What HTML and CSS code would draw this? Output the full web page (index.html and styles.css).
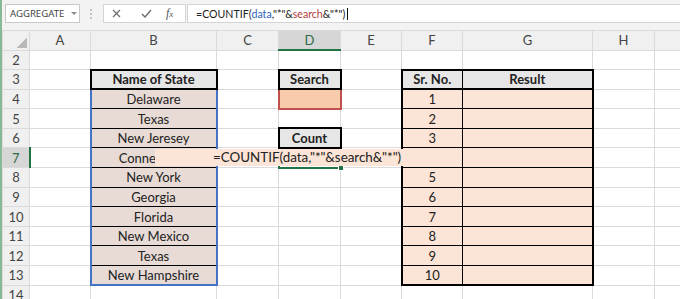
FILE: index.html
```html
<!DOCTYPE html>
<html lang="en">
<head>
<meta charset="utf-8">
<title>COUNTIF wildcard search</title>
<link rel="stylesheet" href="styles.css">
</head>
<body>
<div class="app">
  <div class="toolbar">
    <div class="namebox"><span class="nb-text">AGGREGATE</span><span class="nb-arrow"></span></div>
    <div class="grip"><span></span><span></span><span></span></div>
    <div class="fbtns">
      <svg class="ic-x" width="9" height="9" viewBox="0 0 9 9"><path d="M1 1 L8 8 M8 1 L1 8" stroke="#6d6d6d" stroke-width="1.2" fill="none"/></svg>
      <svg class="ic-ok" width="11" height="9" viewBox="0 0 11 9"><path d="M1 5 L4 8 L10 1" stroke="#6d6d6d" stroke-width="1.4" fill="none"/></svg>
      <span class="fx"><i>f</i><i class="fx-x">x</i></span>
    </div>
    <div class="formula">=COUNTIF(<span class="ref-blue">data</span>,"*"&amp;<span class="ref-red">search</span>&amp;"*")<span class="caret"></span></div>
  </div>
  <div class="sheet">
    <table class="grid">
      <colgroup>
        <col class="c-rh"><col class="c-a"><col class="c-b"><col class="c-c"><col class="c-d"><col class="c-e"><col class="c-f"><col class="c-g"><col class="c-h"><col class="c-i">
      </colgroup>
      <thead>
        <tr class="hrow">
          <th class="corner"><span class="tri"></span></th>
          <th class="ch">A</th><th class="ch">B</th><th class="ch">C</th><th class="ch sel">D</th><th class="ch">E</th><th class="ch">F</th><th class="ch">G</th><th class="ch">H</th><th class="ch"></th>
        </tr>
      </thead>
      <tbody>
        <tr><th class="rh">2</th><td></td><td></td><td></td><td></td><td></td><td></td><td></td><td></td><td></td></tr>
        <tr><th class="rh">3</th><td></td><td class="hdr">Name of State</td><td></td><td class="hdr">Search</td><td></td><td class="hdr fh">Sr. No.</td><td class="hdr gh">Result</td><td></td><td></td></tr>
        <tr><th class="rh">4</th><td></td><td class="st">Delaware</td><td></td><td class="srch"></td><td></td><td class="f">1</td><td class="g"></td><td></td><td></td></tr>
        <tr><th class="rh">5</th><td></td><td class="st">Texas</td><td></td><td></td><td></td><td class="f">2</td><td class="g"></td><td></td><td></td></tr>
        <tr><th class="rh">6</th><td></td><td class="st">New Jeresey</td><td></td><td class="hdr">Count</td><td></td><td class="f">3</td><td class="g"></td><td></td><td></td></tr>
        <tr><th class="rh rsel">7</th><td></td><td class="st">Connecticut</td><td></td><td class="active"><span class="handle"></span></td><td></td><td class="f">4</td><td class="g"></td><td></td><td></td></tr>
        <tr><th class="rh">8</th><td></td><td class="st">New York</td><td></td><td></td><td></td><td class="f">5</td><td class="g"></td><td></td><td></td></tr>
        <tr><th class="rh">9</th><td></td><td class="st">Georgia</td><td></td><td></td><td></td><td class="f">6</td><td class="g"></td><td></td><td></td></tr>
        <tr><th class="rh">10</th><td></td><td class="st">Florida</td><td></td><td></td><td></td><td class="f">7</td><td class="g"></td><td></td><td></td></tr>
        <tr><th class="rh">11</th><td></td><td class="st">New Mexico</td><td></td><td></td><td></td><td class="f">8</td><td class="g"></td><td></td><td></td></tr>
        <tr><th class="rh">12</th><td></td><td class="st">Texas</td><td></td><td></td><td></td><td class="f">9</td><td class="g"></td><td></td><td></td></tr>
        <tr><th class="rh">13</th><td></td><td class="st last">New Hampshire</td><td></td><td></td><td></td><td class="f last">10</td><td class="g last"></td><td></td><td></td></tr>
        <tr><th class="rh">14</th><td></td><td></td><td></td><td></td><td></td><td></td><td></td><td></td><td></td></tr>
      </tbody>
    </table>
    <div class="editor">=COUNTIF(data,"*"&amp;search&amp;"*")</div>
  </div>
</div>
</body>
</html>
```

FILE: styles.css
```css
html, body {
  margin: 0;
  padding: 0;
  background: #fff;
}
body {
  width: 680px;
  height: 299px;
  overflow: hidden;
  font-family: Lato, "Liberation Sans", sans-serif;
}
.app {
  height: 299px;
  border-left: 2px solid #86b995;
  box-sizing: border-box;
  overflow: hidden;
}

/* ---------- formula toolbar ---------- */
.toolbar {
  height: 30px;
  box-sizing: border-box;
  padding-top: 4px;
  background: #f3f3f3;
  display: flex;
  align-items: flex-start;
}
.namebox {
  margin-left: 3px;
  width: 75px;
  height: 19px;
  box-sizing: border-box;
  border: 1px solid #c8c8c8;
  background: #fff;
  display: flex;
  align-items: center;
  padding-left: 4px;
}
.nb-text {
  font-family: "Noto Sans", "Liberation Sans", sans-serif;
  font-size: 9.6px;
  color: #444;
}
.nb-arrow {
  margin-left: 7px;
  width: 0;
  height: 0;
  border-left: 3px solid transparent;
  border-right: 3px solid transparent;
  border-top: 3px solid #8a8a8a;
}
.grip {
  margin-left: 9px;
  height: 19px;
  width: 4px;
  display: flex;
  flex-direction: column;
  justify-content: center;
  align-items: center;
  gap: 2px;
}
.grip span {
  width: 2px;
  height: 2px;
  background: #c2c2c2;
}
.fbtns {
  margin-left: 10px;
  width: 83px;
  height: 19px;
  box-sizing: border-box;
  border: 1px solid #d4d4d4;
  background: #fff;
  display: flex;
  align-items: center;
  padding-left: 8px;
}
.ic-ok { margin-left: 20px; }
.fx {
  margin-left: 14px;
  font-family: "Liberation Serif", serif;
  font-size: 12px;
  color: #555;
}
.fx-x { font-size: 9px; }
.formula {
  margin-left: 1px;
  flex: 1;
  height: 19px;
  box-sizing: border-box;
  border: 1px solid #d4d4d4;
  border-right: none;
  background: #fff;
  padding-left: 8px;
  display: flex;
  align-items: center;
  font-size: 10.6px;
  color: #222;
  white-space: pre;
}
.ref-blue { color: #2f5fb8; }
.ref-red { color: #b03a3a; }
.caret {
  display: inline-block;
  width: 1px;
  height: 12px;
  margin-left: 2px;
  background: #111;
}

/* ---------- sheet ---------- */
.sheet {
  position: relative;
  height: 269px;
  overflow: hidden;
}
.grid {
  border-collapse: collapse;
  table-layout: fixed;
  width: 714px;
  font-size: 13px;
  color: #222;
}
.c-rh { width: 27px; }
.c-a { width: 61px; }
.c-b { width: 126px; }
.c-c { width: 62px; }
.c-d { width: 62px; }
.c-e { width: 61px; }
.c-f { width: 61px; }
.c-g { width: 130px; }
.c-h { width: 62px; }
.c-i { width: 62px; }

.grid tr { height: 19.6px; }
.grid .hrow { height: 19.5px; }
.grid td, .grid th {
  padding: 0;
  border: 1px solid #dadada;
  text-align: center;
  vertical-align: middle;
  white-space: nowrap;
  overflow: hidden;
  font-weight: 400;
  line-height: 16px;
}
.ch {
  background: #f0f0f0;
  color: #444;
  border-color: #d0d0d0;
  border-bottom-color: #ababab;
}
.ch.sel {
  background: #d6d6d6;
  color: #2d6a47;
  border-bottom: 2px solid #217346;
}
.corner {
  background: #f0f0f0;
  border-color: #d0d0d0;
  border-bottom-color: #ababab;
  border-right-color: #ababab;
}
.tri {
  display: block;
  width: 11px;
  height: 11px;
  margin: 5px 2px 1px auto;
  background: linear-gradient(to top left, #b9b9b9 50%, transparent 50%);
}
.rh {
  background: #f0f0f0;
  color: #444;
  border-color: #d0d0d0;
  border-right-color: #ababab;
}
.rh.rsel {
  background: #d6d6d6;
  color: #2d6a47;
  border-right: 2px solid #217346;
}

/* tables */
.hdr {
  background: #e7e6e6;
  font-weight: 700 !important;
  border: 2px solid #000 !important;
}
.hdr.fh { border-right-width: 1px !important; }
.hdr.gh { border-left-width: 1px !important; }
.st {
  background: #e8dbd6;
  border: 1px solid #000 !important;
  border-left: 2px solid #4472c4 !important;
  border-right: 2px solid #4472c4 !important;
}
.st.last { border-bottom: 2px solid #4472c4 !important; }
.srch {
  background: #f8cbad;
  border: 2px solid #c0504d !important;
}
.active {
  position: relative;
  border: 2px solid #217346 !important;
  overflow: visible !important;
}
.handle {
  position: absolute;
  right: -4px;
  bottom: -4px;
  width: 4px;
  height: 4px;
  background: #217346;
  border: 1px solid #fff;
}
.f, .g {
  background: #fce4d6;
  border: 1px solid #000 !important;
}
.f { border-left: 2px solid #000 !important; }
.g { border-right: 2px solid #000 !important; }
.f.last, .g.last { border-bottom: 2px solid #000 !important; }

/* in-cell editor showing the formula */
.editor {
  position: absolute;
  left: 153px;
  top: 118.6px;
  width: 307px;
  height: 17.4px;
  box-sizing: border-box;
  padding-left: 58px;
  background: #fce4d6;
  font-size: 13.4px;
  line-height: 17.4px;
  color: #222;
  white-space: pre;
}
```
